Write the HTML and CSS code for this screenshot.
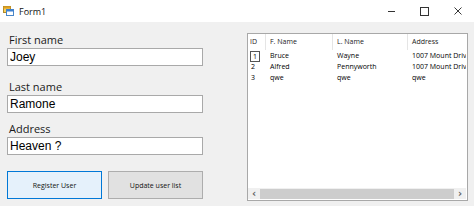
FILE: index.html
```html
<!DOCTYPE html>
<html lang="en">

<head>
    <meta charset="UTF-8">
    <meta name="viewport" content="width=device-width, initial-scale=1.0">
    <title>Form1</title>
    <link rel="stylesheet" href="styles.css">
</head>

<body>
    <div class="titlebar">
        <svg class="appicon" width="11" height="10" viewBox="0 0 11 10">
            <rect x="0.5" y="0.5" width="7" height="6" fill="#f6cf5a" stroke="#b08a2a" />
            <rect x="0.5" y="0.5" width="7" height="2" fill="#e0a020" />
            <rect x="3.5" y="3.5" width="7" height="6" fill="#ffffff" stroke="#4a86c8" />
            <rect x="3.5" y="3.5" width="7" height="2" fill="#3c7fd0" />
        </svg>
        <span class="caption">Form1</span>
        <div class="controls">
            <span class="ctl ctl-min"></span>
            <span class="ctl ctl-max"></span>
            <span class="ctl ctl-close">
                <svg width="8" height="8" viewBox="0 0 8 8">
                    <path d="M0.5 0.5 L7.5 7.5 M7.5 0.5 L0.5 7.5" stroke="#222" stroke-width="0.9" />
                </svg>
            </span>
        </div>
    </div>
    <div class="client">
        <div class="form">
            <div class="field first">
                <label>First name</label>
                <input type="text" value="Joey">
            </div>
            <div class="field second">
                <label>Last name</label>
                <input type="text" value="Ramone">
            </div>
            <div class="field third">
                <label>Address</label>
                <input type="text" value="Heaven ?">
            </div>
            <div class="buttons">
                <button class="btn btn-focus">Register User</button>
                <button class="btn">Update user list</button>
            </div>
        </div>
        <div class="list">
            <div class="list-view">
                <div class="row head">
                    <span>ID</span>
                    <span>F. Name</span>
                    <span>L. Name</span>
                    <span>Address</span>
                </div>
                <div class="row first-row">
                    <span><i class="focus">1</i></span>
                    <span>Bruce</span>
                    <span>Wayne</span>
                    <span>1007 Mount Drive</span>
                </div>
                <div class="row">
                    <span>2</span>
                    <span>Alfred</span>
                    <span>Pennyworth</span>
                    <span>1007 Mount Drive</span>
                </div>
                <div class="row">
                    <span>3</span>
                    <span>qwe</span>
                    <span>qwe</span>
                    <span>qwe</span>
                </div>
            </div>
            <div class="hscroll">
                <span class="arrow">&lsaquo;</span>
                <span class="thumb"></span>
                <span class="arrow">&rsaquo;</span>
            </div>
        </div>
    </div>
</body>

</html>
```

FILE: styles.css
```css
* {
    padding: 0;
    margin: 0;
    box-sizing: border-box;
}

body {
    width: 474px;
    height: 206px;
    overflow: hidden;
    background-color: #f0f0f0;
    font-family: "Open Sans", "Noto Sans", sans-serif;
    color: #000;
}

.titlebar {
    display: flex;
    align-items: center;
    height: 22px;
    background-color: #fff;
    padding-left: 3px;
}

.appicon {
    margin-top: -1px;
}

.caption {
    margin-left: 5px;
    font-size: 9px;
    color: #111;
}

.controls {
    display: flex;
    margin-left: auto;
    height: 22px;
}

.ctl {
    display: flex;
    justify-content: center;
    align-items: center;
    width: 33px;
    height: 22px;
}

.ctl-min::before {
    content: "";
    width: 7px;
    border-top: 1px solid #333;
}

.ctl-max::before {
    content: "";
    width: 7px;
    height: 7px;
    border: 1px solid #333;
}

.client {
    display: flex;
    padding: 0 6px 0 7px;
}

.form {
    width: 196px;
    padding-top: 11px;
}

.field label {
    display: block;
    padding-left: 2px;
    font-size: 11px;
    line-height: 14px;
    color: #1a1a1a;
}

.field input {
    display: block;
    width: 196px;
    height: 18px;
    margin-top: 1px;
    padding: 0 2px;
    border: 1px solid #a9a9a9;
    background-color: #fff;
    font-family: "Liberation Sans", Arial, sans-serif;
    font-size: 12px;
    color: #000;
    outline: none;
}

.second {
    margin-top: 14px;
}

.third {
    margin-top: 9px;
}

.buttons {
    display: flex;
    gap: 6px;
    margin-top: 16px;
}

.btn {
    width: 95px;
    height: 28px;
    border: 1px solid #adadad;
    background-color: #e1e1e1;
    font-family: "Open Sans", "Noto Sans", sans-serif;
    font-size: 7px;
    color: #111;
}

.btn-focus {
    border-color: #0078d7;
    background-color: #e5f1fb;
}

.list {
    display: flex;
    flex-direction: column;
    margin-left: auto;
    margin-top: 11px;
    width: 221px;
    height: 168px;
    border: 1px solid #a8a8a8;
    background-color: #fff;
    padding: 0 1px 1px 0;
}

.list-view {
    flex: 1;
    overflow: hidden;
}

.row {
    display: grid;
    grid-template-columns: 18px 67px 75px 120px;
    font-size: 7px;
    line-height: 10.4px;
    white-space: nowrap;
    color: #000;
}

.row span {
    padding-left: 4px;
    overflow: hidden;
}

.row span:first-child {
    padding-left: 3px;
}

.head {
    height: 16px;
    line-height: 15px;
    margin-bottom: 1px;
    color: #222;
}

.head span {
    border-right: 1px solid #e5e5e5;
}

.head span:first-child {
    padding-left: 2px;
}

.focus {
    font-style: normal;
    display: inline-block;
    margin-left: -1px;
    padding: 0 2px;
    line-height: 9px;
    border: 1px solid #555;
}

.hscroll {
    display: flex;
    align-items: center;
    height: 11px;
    background-color: #f0f0f0;
}

.arrow {
    width: 12px;
    text-align: center;
    font-family: "DejaVu Sans", sans-serif;
    font-size: 10px;
    font-weight: bold;
    line-height: 11px;
    color: #606060;
}

.thumb {
    flex: 1;
    height: 10px;
    background-color: #cdcdcd;
}
```
